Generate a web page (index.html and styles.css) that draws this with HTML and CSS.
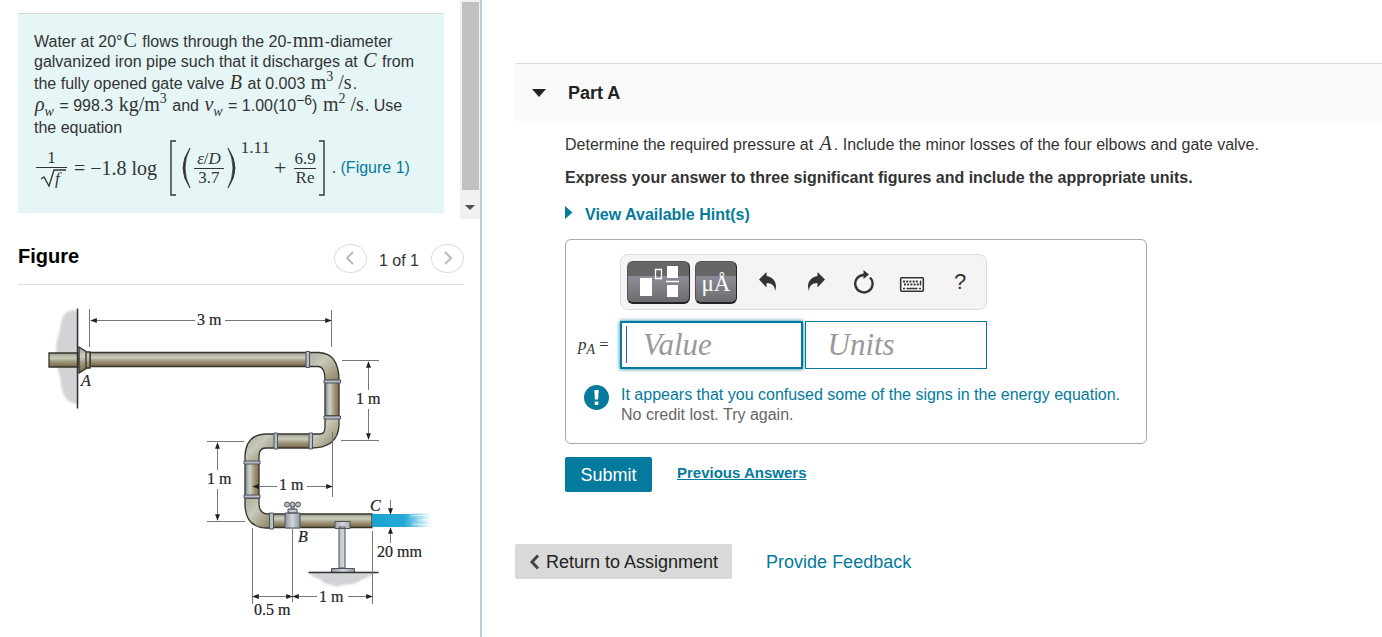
FILE: index.html
```html
<!DOCTYPE html>
<html lang="en">
<head>
<meta charset="utf-8">
<title>Part A</title>
<link rel="stylesheet" href="styles.css">
</head>
<body>
<div class="page">
  <aside class="side">
    <section class="problem">
      <div class="problem-body">
        <p class="statement">Water at 20°<span class="math">C</span> flows through the 20-<span class="math">mm</span>-diameter<br>galvanized iron pipe such that it discharges at <i class="math">C</i> from</p>
        <p class="statement loose">the fully opened gate valve <i class="math">B</i> at 0.003 <span class="math">m<sup>3</sup> /s</span>.<br><i class="math">ρ<sub>w</sub></i> = 998.3 <span class="math">kg/m<sup>3</sup></span> and <i class="math">ν<sub>w</sub></i> = 1.00(10<sup>−6</sup>) <span class="math">m<sup>2</sup> /s</span>. Use<br>the equation</p>
        <div class="equation">
          <span class="frac"><span>1</span><span class="den root"><svg width="26" height="20" viewBox="0 0 26 20"><path d="M1 11l3-2 5 9L14 2h12" fill="none" stroke="#333" stroke-width="1.3"/></svg><i>f</i></span></span>
          <span class="eq">= −1.8 log</span>
          <svg class="bracket" width="8" height="56" viewBox="0 0 8 56"><path d="M7 1H2v54h5" fill="none" stroke="#333" stroke-width="1.4"/></svg>
          <svg width="10" height="42" viewBox="0 0 10 42"><path d="M9 1Q-5 21 9 41Q-1 21 9 1z" fill="#333" stroke="#333" stroke-width=".8"/></svg>
          <span class="frac wide"><span><i>ε</i>/<i>D</i></span><span class="den">3.7</span></span>
          <svg width="10" height="42" viewBox="0 0 10 42"><path d="M1 1Q15 21 1 41Q11 21 1 1z" fill="#333" stroke="#333" stroke-width=".8"/></svg>
          <span class="power">1.11</span>
          <span class="plus">+</span>
          <span class="frac"><span>6.9</span><span class="den">Re</span></span>
          <svg width="8" height="56" viewBox="0 0 8 56"><path d="M1 1h5v54H1" fill="none" stroke="#333" stroke-width="1.4"/></svg>
          <span class="figure-ref">. <a href="#figure">(Figure 1)</a></span>
        </div>
      </div>
      <div class="scrollbar"><div class="thumb"></div><svg width="10" height="5" viewBox="0 0 10 5"><path d="M0 0h10L5 5z" fill="#505050"/></svg></div>
    </section>
    <section class="figure" id="figure">
      <header class="figure-head">
        <h2>Figure</h2>
        <nav class="pager">
          <button aria-label="Previous figure"><svg width="10" height="14" viewBox="0 0 10 14"><path d="M8 1L2 7l6 6" fill="none" stroke="#bbb" stroke-width="2"/></svg></button>
          <span>1 of 1</span>
          <button aria-label="Next figure"><svg width="10" height="14" viewBox="0 0 10 14"><path d="M2 1l6 6-6 6" fill="none" stroke="#bbb" stroke-width="2"/></svg></button>
        </nav>
      </header>
      <svg class="diagram" viewBox="18 295 446 330" role="img" aria-label="Pipe system with four elbows and a gate valve">
        <defs>
          <linearGradient id="ph" x1="0" y1="0" x2="0" y2="1"><stop offset="0" stop-color="#999c8c"/><stop offset=".35" stop-color="#cccdbd"/><stop offset=".6" stop-color="#a29a80"/><stop offset="1" stop-color="#766342"/></linearGradient>
          <linearGradient id="pv" x1="0" y1="0" x2="1" y2="0"><stop offset="0" stop-color="#7c889b"/><stop offset=".35" stop-color="#d2d3c9"/><stop offset=".65" stop-color="#a49a7d"/><stop offset="1" stop-color="#806d49"/></linearGradient>
          <linearGradient id="el" x1="0" y1="0" x2="1" y2="1"><stop offset="0" stop-color="#aaad9f"/><stop offset=".4" stop-color="#c7c9ba"/><stop offset="1" stop-color="#8c7f60"/></linearGradient>
          <linearGradient id="metal" x1="0" y1="0" x2="1" y2="0"><stop offset="0" stop-color="#8f959f"/><stop offset=".5" stop-color="#d2d6dc"/><stop offset="1" stop-color="#8f959f"/></linearGradient>
          <linearGradient id="water" x1="0" y1="0" x2="1" y2="0"><stop offset="0" stop-color="#1aa3d0"/><stop offset=".55" stop-color="#25aad6"/><stop offset="1" stop-color="#fff"/></linearGradient>
          <pattern id="grain" width="9" height="9" patternUnits="userSpaceOnUse"><rect width="9" height="9" fill="#cfd0d3"/><path d="M1 2h1M6 1h1M4 5h1M8 7h1M2 8h1" stroke="#f4f4f4"/></pattern>
          <filter id="soft"><feGaussianBlur stdDeviation=".8"/></filter>
          <marker id="arrow" viewBox="0 0 8 6" refX="7" refY="3" markerWidth="7" markerHeight="5" markerUnits="userSpaceOnUse" orient="auto-start-reverse"><path d="M0 0l8 3-8 3z" fill="#222"/></marker>
        </defs>
        <path d="M78 311c-10-2-16 3-17 13-1 12-7 18-4 31-2 11 4 19 4 30 2 12 7 18 17 19z" fill="url(#grain)" filter="url(#soft)"/>
        <path d="M309 572h65c-5 7-11 6-16 10-7 4-14 1-20 5-8-3-13-2-18-8-5 0-8-3-11-7z" fill="url(#grain)" filter="url(#soft)"/>
        <g class="pipe">
          <path d="M49 353h29v14H49z" fill="url(#ph)"/>
          <path d="M90 352.500h218v14H90z" fill="url(#ph)"/>
          <path d="M79 347l8 5h3v16h-3l-8 5z" fill="url(#ph)"/><path d="M86 352v16" fill="none"/>
          <path d="M309 352.500h10q20 1 20 28h-14q0-14-7-14h-9z" fill="url(#el)"/>
          <path d="M325 382h14v34h-14z" fill="url(#pv)"/>
          <path d="M325 417h14v8q-1 23-28 23v-14h9q5 0 5-7z" fill="url(#el)"/>
          <path d="M277 434h33v14h-33z" fill="url(#ph)"/>
          <path d="M276 434v14h-10q-7 0-7 8v6h-14v-6q1-22 22-22z" fill="url(#el)"/>
          <path d="M245 463h14v34h-14z" fill="url(#pv)"/>
          <path d="M245 498h14v7q1 9 9 9h3v14h-5q-21-1-21-24z" fill="url(#el)"/>
          <path d="M272 514h100v13.500H272z" fill="url(#ph)"/>
        </g>
        <path d="M372 514h37l22-1v14h-59z" fill="url(#water)"/>
        <path d="M410 516l20-1M412 524l18 1M418 520h12" stroke="#fff" stroke-width="1" opacity=".6"/>
        <g class="fitting">
          <path d="M306 351.500h3.500v16H306zM324 380h16.500v3H324zM324 416h16.500v3H324zM309 433h3.500v16H309zM274 433h3.500v16H274zM244 461h16v3h-16zM244 495h16v3h-16zM269.500 513h4v16h-4z"/>
          <path d="M285 513h15v15h-15zM288 509h9v4h-9z" fill="url(#metal)"/>
          <path d="M291 505h3v4h-3z"/>
          <circle cx="287" cy="504.500" r="2.500"/><circle cx="292.500" cy="504.500" r="2.500"/><circle cx="298" cy="504.500" r="2.500"/>
          <path d="M339 527h6v41h-6zM335 521.500h15v7h-15zM331.500 568.500h23v4h-23z" fill="url(#metal)"/>
        </g>
        <path d="M77.500 308.500v100M308.500 572.500h70" class="wall"/>
        <g class="guide">
          <path d="M89.500 309v38M331.500 310v37M342 360.500h37M341 440.500h38M207 441.500h37M207 521.500h38M332.500 432v65M252.500 528v76M292.500 529v73M372.500 531v73"/>
        </g>
        <g class="dim">
          <path d="M195 320.500H91" marker-end="url(#arrow)"/><path d="M225 320.500h106" marker-end="url(#arrow)"/>
          <path d="M368.500 390v-28" marker-end="url(#arrow)"/><path d="M368.500 409v30" marker-end="url(#arrow)"/>
          <path d="M217.500 470v-27" marker-end="url(#arrow)"/><path d="M217.500 489v31" marker-end="url(#arrow)"/>
          <path d="M277 486.500h-24" marker-end="url(#arrow)"/><path d="M307 486.500h25" marker-end="url(#arrow)"/>
          <path d="M253 596.500h39" marker-start="url(#arrow)" marker-end="url(#arrow)"/>
          <path d="M317 596.500h-24" marker-end="url(#arrow)"/><path d="M348 596.500h24" marker-end="url(#arrow)"/>
          <path d="M390.500 500v14" marker-end="url(#arrow)"/><path d="M390.500 543v-15" marker-end="url(#arrow)"/>
        </g>
        <g class="labels">
          <text x="197" y="325">3 m</text><text x="356" y="404">1 m</text><text x="207" y="484">1 m</text>
          <text x="279" y="490">1 m</text><text x="319" y="602">1 m</text><text x="254" y="615">0.5 m</text><text x="377" y="557">20 mm</text>
          <text x="81" y="386" class="it">A</text><text x="298" y="542" class="it">B</text><text x="370" y="511" class="it">C</text>
        </g>
      </svg>
    </section>
  </aside>
  <main class="main">
    <header class="part-head">
      <svg width="14" height="8" viewBox="0 0 14 8"><path d="M0 0h14L7 8z" fill="#222"/></svg>
      <h1>Part A</h1>
    </header>
    <div class="part-body">
      <p class="prompt">Determine the required pressure at <i class="math">A</i>. Include the minor losses of the four elbows and gate valve.</p>
      <p class="prompt strong">Express your answer to three significant figures and include the appropriate units.</p>
      <a class="hints" href="#hints"><svg width="8" height="13" viewBox="0 0 8 13"><path d="M0 0l7.500 6.500L0 13z" fill="#047a9c"/></svg>View Available Hint(s)</a>
      <form class="answer">
        <div class="answer-grid">
          <div class="toolbar">
            <button type="button" class="tool tool-wide" aria-label="Templates"><svg width="40" height="34" viewBox="0 0 40 34"><path d="M1 14h12v18H1z" fill="#fff"/><path d="M16.500 5.500h6v9h-6z" fill="none" stroke="#fff" stroke-width="1.300"/><path d="M28 2h11v12H28zM28 21h11v12H28z" fill="#fff"/><path d="M27 17.500h13" stroke="#fff" stroke-width="1.500"/></svg></button>
            <button type="button" class="tool" aria-label="Units">μÅ</button>
            <button type="button" class="plain" aria-label="Undo"><svg width="18" height="20" viewBox="0 0 18 20"><path d="M0 7.500L7.500 0v4C15 5 19 12 16 19c0-5-3-8-8.500-8v4.500z" fill="#333"/></svg></button>
            <button type="button" class="plain" aria-label="Redo"><svg width="18" height="20" viewBox="0 0 18 20"><path d="M18 7.500L10.500 0v4C3 5-1 12 2 19c0-5 3-8 8.500-8v4.500z" fill="#333"/></svg></button>
            <button type="button" class="plain" aria-label="Reset"><svg width="22" height="24" viewBox="0 0 22 24"><path d="M17 7.500A8.700 8.700 0 1 1 11 5" fill="none" stroke="#333" stroke-width="2.400"/><path d="M10.500 0l5.500 4.500-5.500 4.500z" fill="#333"/></svg></button>
            <button type="button" class="plain" aria-label="Keyboard"><svg width="26" height="24" viewBox="0 0 26 24"><rect x="1.700" y="7.700" width="22.600" height="13.600" rx="1" fill="#fff" stroke="#333" stroke-width="1.600"/><path d="M4 11.500h16M5 14.500h15" stroke="#333" stroke-width="1.800" stroke-dasharray="2 1.200"/><path d="M21.500 10.500v5" stroke="#333" stroke-width="1.500"/><path d="M4 18.500h2M7.500 18.500h11M20 18.500h2" stroke="#333" stroke-width="1.500"/></svg></button>
            <button type="button" class="plain help" aria-label="Help">?</button>
          </div>
          <label class="quantity" for="value"><i>p<sub>A</sub></i> =</label>
          <div class="fields">
            <span class="value-wrap"><input id="value" class="active" placeholder="Value"></span>
            <input aria-label="Units" placeholder="Units">
          </div>
        </div>
        <div class="feedback">
          <svg width="25" height="25" viewBox="0 0 25 25"><circle cx="12.500" cy="12.500" r="12.500" fill="#047a9c"/><path d="M10.300 5h4.400l-.6 9.500h-3.200zM10.700 16.500h3.600v3.500h-3.600z" fill="#fff"/></svg>
          <p><span>It appears that you confused some of the signs in the energy equation.</span><br>No credit lost. Try again.</p>
        </div>
      </form>
      <div class="actions"><button class="submit">Submit</button><a href="#previous">Previous Answers</a></div>
    </div>
    <footer class="foot">
      <button class="return"><svg width="11" height="16" viewBox="0 0 11 16"><path d="M9 1.500L3 8l6 6.500" fill="none" stroke="#444" stroke-width="3"/></svg>Return to Assignment</button>
      <a href="#feedback">Provide Feedback</a>
    </footer>
  </main>
</div>
</body>
</html>
```
FILE: styles.css
```css
* { box-sizing: border-box; }
body { margin: 0; background: #fff; color: #333; font: 16px/20px "Liberation Sans", Arial, sans-serif; }
h1, h2, p { margin: 0; }
a { color: #047a9c; text-decoration: none; }
button { font: inherit; cursor: pointer; }
svg { display: block; flex-shrink: 0; }
sub, sup { font-size: 14px; line-height: 0; }
.page { display: flex; min-height: 100vh; }

.side { flex: 0 0 482px; border-right: 2px solid #b8cce0; }
.problem { display: flex; justify-content: space-between; height: 219px; padding-left: 18px; }
.problem-body { width: 426px; height: 200px; margin-top: 13px; padding: 18px 16px 0; background: #e6f6f7; border-top: 1px solid #d6dcdc; white-space: nowrap; }
.statement.loose { padding-top: 1px; line-height: 22px; }
.math, .frac, .eq, .power, .plus { font-family: "Liberation Serif", "Times New Roman", serif; }
.math { margin: 0 1px; font-size: 20px; line-height: 0; }
.equation { display: flex; align-items: center; margin: 1px 0 0 2px; height: 56px; }
.frac { display: flex; flex-direction: column; align-items: center; font-size: 17px; line-height: 18px; }
.frac > span { padding: 0 2px; }
.frac.wide { margin: 0 2px; }
.frac.wide > span { padding: 0 4px; }
.frac .den { border-top: 1px solid #333; }
.frac .root { display: flex; padding: 0 0 0 4px; }
.root i { width: 12px; padding-top: 2px; }
.root svg { margin-right: -11px; }
.eq { margin: 0 12px 0 7px; font-size: 20px; }
.bracket { margin-right: 4px; }
.power { align-self: flex-start; margin: -2px 4px 0 4px; font-size: 17px; }
.plus { margin-right: 6px; font-size: 22px; }
.figure-ref { margin-left: 6px; }
.scrollbar { display: flex; flex-direction: column; align-items: center; justify-content: space-between; width: 20px; padding: 2px 2px 9px; background: #f1f1f1; }
.thumb { width: 17px; height: 188px; background: #c1c1c1; }

.figure { padding: 20px 16px 0 18px; }
.figure-head { display: flex; align-items: center; justify-content: space-between; height: 46px; padding-bottom: 7px; border-bottom: 1px solid #ddd; }
.figure-head h2 { padding-bottom: 4px; color: #000; font-size: 20px; line-height: 24px; }
.pager { display: flex; align-items: center; gap: 12px; }
.pager span { padding-top: 6px; }
.pager button { display: flex; align-items: center; justify-content: center; width: 33px; height: 29px; padding: 0; background: #fff; border: 1px solid #ddd; border-radius: 50%; }
.diagram { width: 100%; margin-top: 10px; }
.pipe { stroke: #35342c; stroke-width: 1.3; }
.fitting { fill: #b9bfc8; stroke: #4d535b; stroke-width: 1; }
.wall { fill: none; stroke: #333; stroke-width: 1.5; }
.guide { fill: none; stroke: #777; }
.dim { fill: none; stroke: #777; }
.labels { fill: #222; stroke: #222; stroke-width: .2; font: 16px "Liberation Serif", "Times New Roman", serif; }
.it { font-style: italic; }

.main { flex: 1; min-width: 0; padding: 63px 0 0 33px; }
.part-head { display: flex; align-items: center; gap: 22px; height: 58px; padding-left: 17px; background: #f9f9f9; border-top: 1px solid #ddd; }
.part-head h1 { color: #222; font-size: 18px; line-height: 24px; }
.part-body { padding: 14px 0 0 50px; }
.prompt { margin-bottom: 13px; }
.prompt .math { margin: 0 2px; }
.strong { margin-bottom: 17px; font-weight: bold; }
.hints { display: flex; gap: 12px; font-weight: bold; }
.hints svg { margin-top: 1px; }
.answer { max-width: 582px; margin-top: 14px; padding: 14px 18px 18px 12px; border: 1px solid #aaa; border-radius: 6px; }
.answer-grid { display: grid; grid-template-columns: 42px 367px; row-gap: 11px; align-items: center; }
.toolbar { grid-column: 2; display: flex; align-items: center; height: 56px; padding: 0 0 0 6px; background: #f4f4f4; border: 1px solid #ddd; border-radius: 8px; }
.tool { flex-shrink: 0; width: 42px; height: 43px; padding: 4px 0 0; color: #fff; background: linear-gradient(#666 0 35%, #8d8c96 35%, #6d6d70); border: 1px solid #555; border-right-color: #222; border-bottom: 2px solid #222; border-radius: 6px; font: 23px "Liberation Serif", serif; }
.tool-wide { display: flex; justify-content: center; width: 63px; margin-right: 5px; padding: 2px 0 0; }
.plain { display: flex; flex-shrink: 0; align-items: center; justify-content: center; width: 48px; height: 43px; padding: 0; color: #333; background: none; border: 0; }
.tool + .plain { margin-left: 7px; }
.help { font-size: 22px; }
.quantity { font: 17px/20px "Liberation Serif", serif; }
.fields { display: grid; grid-template-columns: 1fr 1fr; gap: 2px; height: 48px; }
.fields input { width: 100%; height: 48px; padding: 0 22px; color: #333; background: #fff; border: 1px solid #047a9c; border-radius: 0; outline: 0; font: italic 31px "Liberation Serif", serif; }
.fields ::placeholder { color: #999; opacity: 1; }
.fields .active { border-width: 2px; box-shadow: 0 0 4px #047a9c; padding-left: 21px; }
.value-wrap { position: relative; }
.value-wrap::after { content: ""; position: absolute; left: 6px; top: 5px; width: 1px; height: 37px; background: #2a5bd7; }
.feedback { display: flex; gap: 12px; padding: 16px 0 0 6px; color: #666; }
.feedback p { flex: 1; white-space: nowrap; }
.feedback span { color: #047a9c; }
.actions { display: flex; align-items: center; gap: 25px; margin-top: 13px; }
.actions a { padding-bottom: 4px; font-size: 15px; font-weight: bold; text-decoration: underline; }
.submit { width: 87px; height: 35px; padding: 0; color: #fff; background: #047a9c; border: 0; border-radius: 2px; font-size: 18px; }
.foot { display: flex; align-items: center; gap: 34px; margin-top: 52px; font-size: 18px; }
.return { display: flex; align-items: center; gap: 6px; height: 35px; padding: 0 14px; color: #222; background: #d9d9d9; border: 0; border-radius: 2px; }
```
